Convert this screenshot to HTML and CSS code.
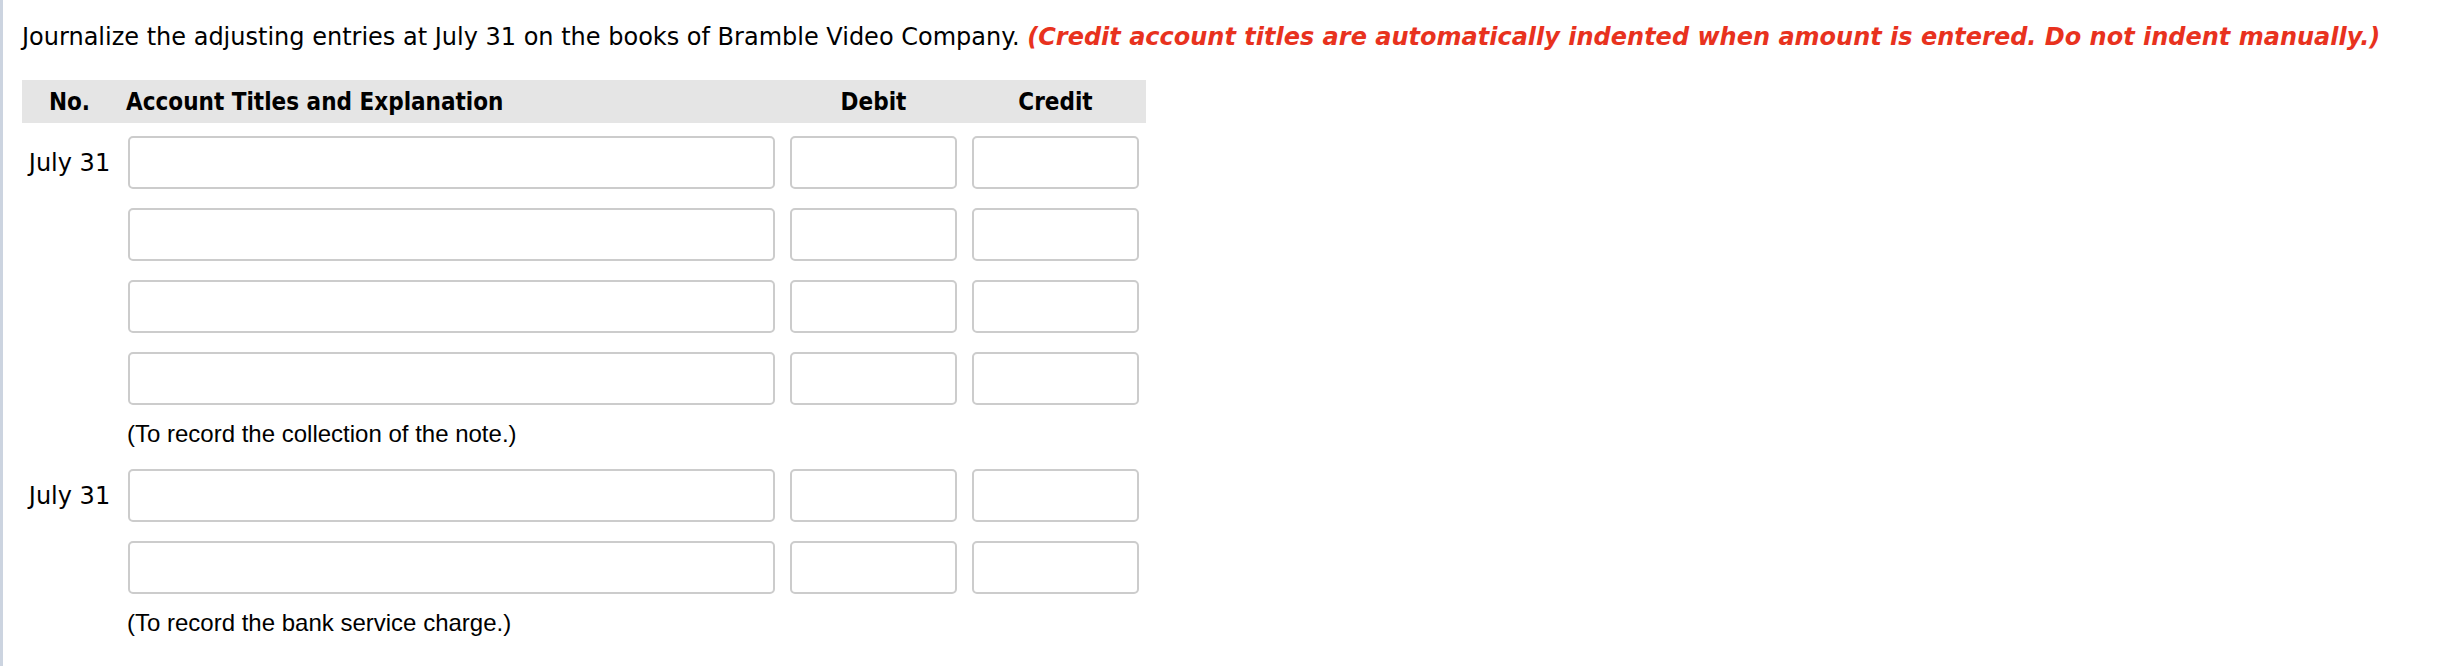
FILE: index.html
```html
<!DOCTYPE html>
<html>
<head>
<meta charset="utf-8">
<link rel="stylesheet" href="styles.css">
</head>
<body>
<div class="page">
  <p class="prompt">Journalize the adjusting entries at July 31 on the books of Bramble Video Company. <em class="note">(Credit account titles are automatically indented when amount is entered. Do not indent manually.)</em></p>
  <div class="journal">
    <div class="head">
      <div class="c-no">No.</div>
      <div class="c-title">Account Titles and Explanation</div>
      <div class="c-amt">Debit</div>
      <div class="c-amt">Credit</div>
    </div>
    <div class="group">
      <div class="row"><div class="date">July 31</div><div class="box"></div><div class="box"></div><div class="box"></div></div>
      <div class="row"><div class="date"></div><div class="box"></div><div class="box"></div><div class="box"></div></div>
      <div class="row"><div class="date"></div><div class="box"></div><div class="box"></div><div class="box"></div></div>
      <div class="row"><div class="date"></div><div class="box"></div><div class="box"></div><div class="box"></div></div>
      <div class="expl">(To record the collection of the note.)</div>
    </div>
    <div class="group">
      <div class="row"><div class="date">July 31</div><div class="box"></div><div class="box"></div><div class="box"></div></div>
      <div class="row"><div class="date"></div><div class="box"></div><div class="box"></div><div class="box"></div></div>
      <div class="expl">(To record the bank service charge.)</div>
    </div>
  </div>
</div>
</body>
</html>
```
FILE: styles.css
```css
html, body {
  margin: 0;
  padding: 0;
  background: #ffffff;
}
body {
  font-family: Verdana, "DejaVu Sans", sans-serif;
  font-size: 24px;
  color: #000000;
}
.page {
  border-left: 3px solid #ccd4e0;
  min-height: 666px;
  box-sizing: border-box;
  padding: 22px 0 0 19px;
}
.prompt {
  margin: 0;
  line-height: 30px;
  white-space: nowrap;
}
.note {
  color: #e8321e;
  font-weight: bold;
  font-style: italic;
}
.journal {
  margin-top: 28px;
  width: 1124px;
}
.head {
  display: grid;
  grid-template-columns: 91px 647px 167px 167px;
  column-gap: 15px;
  align-items: center;
  background: #e5e5e5;
  height: 43px;
  font-family: Tahoma, "DejaVu Sans Condensed", "DejaVu Sans", sans-serif;
  font-weight: bold;
}
.c-no {
  text-align: center;
  padding-left: 4px;
}
.c-title {
  margin-left: -2px;
}
.c-amt {
  text-align: center;
}
.group {
  display: flex;
  flex-direction: column;
}
.head + .group {
  margin-top: 13px;
}
.row {
  display: grid;
  grid-template-columns: 91px 647px 167px 167px;
  column-gap: 15px;
  align-items: center;
  margin-bottom: 19px;
}
.date {
  text-align: center;
  padding-left: 4px;
  white-space: nowrap;
}
.box {
  height: 53px;
  box-sizing: border-box;
  border: 2px solid #cccccc;
  border-radius: 5px;
  background: #ffffff;
}
.expl {
  font-family: Arial, "Liberation Sans", sans-serif;
  font-size: 24px;
  line-height: 28px;
  margin: -4px 0 21px 105px;
}
```
